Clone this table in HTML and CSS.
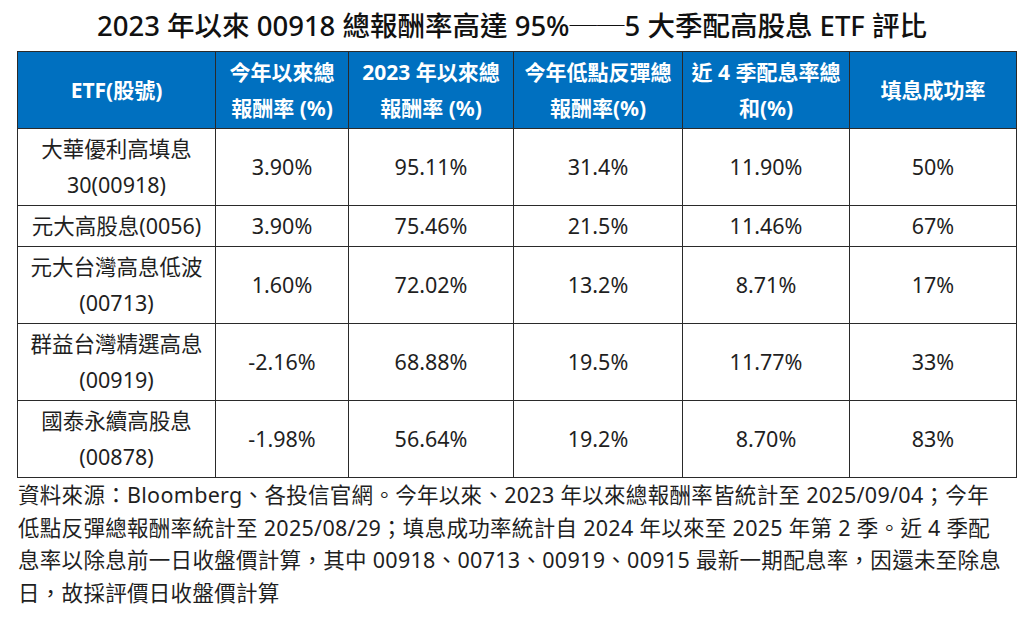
FILE: index.html
```html
<!DOCTYPE html>
<html lang="zh-Hant">
<head>
<meta charset="utf-8">
<title>ETF 評比</title>
<link rel="stylesheet" href="styles.css">
</head>
<body>
<div class="page">
  <h1 class="title">2023 年以來 00918 總報酬率高達 95%──5 大季配高股息 ETF 評比</h1>
  <table class="grid">
    <colgroup>
      <col class="c1"><col class="c2"><col class="c3"><col class="c4"><col class="c5"><col class="c6">
    </colgroup>
    <thead>
      <tr>
        <th>ETF(股號)</th>
        <th>今年以來總<br>報酬率 (%)</th>
        <th>2023 年以來總<br>報酬率 (%)</th>
        <th>今年低點反彈總<br>報酬率(%)</th>
        <th>近 4 季配息率總<br>和(%)</th>
        <th>填息成功率</th>
      </tr>
    </thead>
    <tbody>
      <tr><td>大華優利高填息<br>30(00918)</td><td>3.90%</td><td>95.11%</td><td>31.4%</td><td>11.90%</td><td>50%</td></tr>
      <tr><td>元大高股息(0056)</td><td>3.90%</td><td>75.46%</td><td>21.5%</td><td>11.46%</td><td>67%</td></tr>
      <tr><td>元大台灣高息低波<br>(00713)</td><td>1.60%</td><td>72.02%</td><td>13.2%</td><td>8.71%</td><td>17%</td></tr>
      <tr><td>群益台灣精選高息<br>(00919)</td><td>-2.16%</td><td>68.88%</td><td>19.5%</td><td>11.77%</td><td>33%</td></tr>
      <tr><td>國泰永續高股息<br>(00878)</td><td>-1.98%</td><td>56.64%</td><td>19.2%</td><td>8.70%</td><td>83%</td></tr>
    </tbody>
  </table>
  <p class="note">資料來源：Bloomberg、各投信官網。今年以來、2023 年以來總報酬率皆統計至 2025/09/04；今年<br>低點反彈總報酬率統計至 2025/08/29；填息成功率統計自 2024 年以來至 2025 年第 2 季。近 4 季配<br>息率以除息前一日收盤價計算，其中 00918、00713、00919、00915 最新一期配息率，因還未至除息<br>日，故採評價日收盤價計算</p>
</div>
</body>
</html>
```

FILE: styles.css
```css
html, body {
  margin: 0;
  padding: 0;
  background: #ffffff;
}

body {
  font-family: "Noto Sans", "Noto Sans CJK TC", sans-serif;
  color: #1f1f1f;
}

.page {
  width: 1024px;
  padding: 0 0 0 17px;
  box-sizing: border-box;
}

.title {
  margin: 0;
  padding: 8px 0 0 0;
  height: 42px;
  box-sizing: border-box;
  width: 990px;
  text-align: center;
  font-size: 27.5px;
  line-height: 36px;
  font-weight: 500;
  color: #111;
  white-space: nowrap;
}

.grid {
  margin-top: 9px;
  border-collapse: collapse;
  table-layout: fixed;
  width: 999px;
  border: 1px solid #2a2a2a;
}

.c1 { width: 198px; }
.c2 { width: 133px; }
.c3 { width: 165px; }
.c4 { width: 169px; }
.c5 { width: 167px; }
.c6 { width: 167px; }

.grid th,
.grid td {
  border: 1px solid #2a2a2a;
  text-align: center;
  vertical-align: middle;
  padding: 2px 0;
  white-space: nowrap;
}

.grid th {
  background: #0070c0;
  color: #ffffff;
  font-size: 21px;
  font-weight: 700;
  line-height: 36px;
}

.grid td {
  font-size: 21.5px;
  font-weight: 400;
  line-height: 36px;
  color: #1f1f1f;
}

.note {
  margin: 1px 0 0 1px;
  font-size: 21.5px;
  letter-spacing: 0.3px;
  line-height: 32.5px;
  color: #1f1f1f;
  white-space: nowrap;
}
```
